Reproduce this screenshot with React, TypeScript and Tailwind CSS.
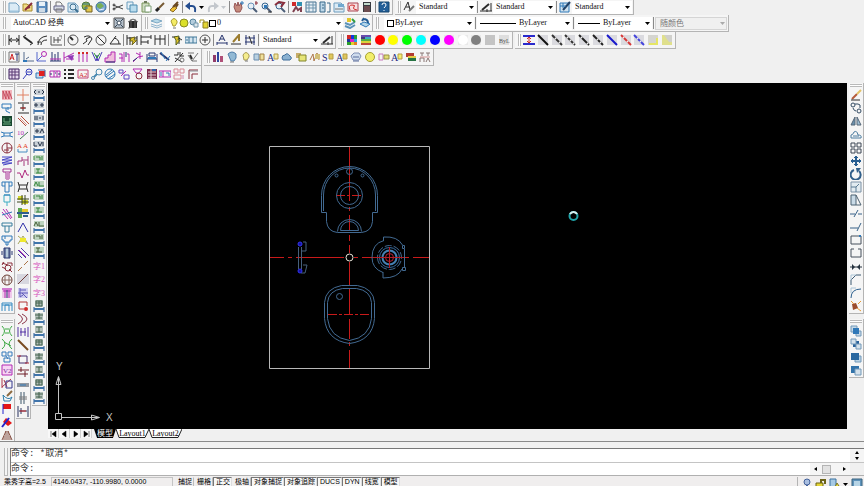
import React from "react";

/* ---------- icon data: every icon lives on a 12 x 12 grid ---------- */

type Shape = { d?: string; s?: string; f?: string; w?: number; t?: string; x?: number; y?: number; z?: number };
type Icon = { n: string; g: Shape[] };

const K = "#2a2a2a";
const N = "#27346e";
const B = "#2f78b8";
const L = "#9cc3dd";
const R = "#d02a2a";
const P = "#b32bb3";
const G = "#2f9e3c";
const Y = "#e3c62c";
const GR = "#777777";
const BR = "#8a2f3c";

const ln = (d: string, s = K, w = 1): Shape => ({ d, s, w });
const fl = (d: string, f: string, s?: string): Shape => ({ d, f, s, w: 1 });
const tx = (t: string, x: number, y: number, s: string, z = 8): Shape => ({ t, x, y, s, z });
const cir = (x: number, y: number, r: number) => `M${x - r} ${y}a${r} ${r} 0 1 0 ${2 * r} 0a${r} ${r} 0 1 0 ${-2 * r} 0z`;
const ic = (n: string, ...g: Shape[]): Icon => ({ n, g });

const page = fl("M1 2h7l3 3v6h-10z", "#dcebf5", "#6f9dbf");

const fileIcons = [
  ic("New", page, ln("M2 10h8", L)),
  ic("Open", fl("M1 3h4l1 1h4v6h-9z", "#f1dc86", "#a88b2c"), ln("M3 9l7-7M5 7l3-1", BR, 2)),
  ic("Save", fl("M1 1h10v10h-10z", "#5d8fc2", "#3a6591"), fl("M3 1h6v4h-6z", "#e8f1f8"), fl("M3 7h6v4h-6z", "#cfdbe6")),
];
const plotIcons = [
  ic("Plot", ln("M3 5v-4h4l2 2v2", GR), fl("M1 5h10v4h-10z", "#d5d9e5", "#666688"), ln("M3 8h6v3h-6z", GR)),
  ic("Plot preview", page, ln(cir(6, 6, 3), "#3d6f91"), ln("M8 8l3 3", "#3d6f91", 2)),
  ic("Publish", fl(cir(5, 5, 4), "#a5ba40", "#4d793f"), fl("M5 5h6v6h-6z", "#e1c64d", "#756225"), ln("M2 3h6M3 7h4", "#3378a5")),
  ic("3D DWF", fl(cir(6, 6, 5), "#7da9d3", "#396c9a"), fl("M2 3l4-1 3 3-4 3-3-2z", "#78ad57"), ln("M4 9l5-1", "#eeeeff")),
];
const editIcons = [
  ic("Cut", ln("M1 4l10 4M1 8l10-4", "#444"), ln(cir(2, 4, 1), "#444"), ln(cir(2, 8, 1), "#444")),
  ic("Copy", fl("M1 1h6v7h-6z", "#e5f1f8", "#6a9cbc"), fl("M4 4h7v7h-7z", "#b9dced", "#4b88ad")),
  ic("Paste", fl("M2 2h7v9h-7z", "#d0dcc3", "#78955b"), fl("M5 5h6v6h-6z", "#fff", "#7e9f77"), ln("M4 1h3", "#6d7a5c", 2)),
  ic("Match properties", ln("M2 10l3-3", "#222", 3), ln("M5 7l5-5", "#775a33", 2)),
  ic("Block editor", fl("M2 9l4-4 3 2-4 4z", "#edbf37", "#8a6920"), ln("M5 6l5-5M8 6l2-3", "#6b4a22", 2)),
];
const undoIcon = [ic("Undo", ln("M3 5h4q4 0 3 6", "#244d8f", 2), fl("M0 5l5-4v8z", "#244d8f"))];
const redoIcon = [ic("Redo", ln("M9 5h-4q-4 0-3 6", "#c3c7cc", 2), fl("M12 5l-5-4v8z", "#c3c7cc"))];
const lens = (c: string) => [fl(cir(5, 5, 3), "#e7eff5", c), ln("M7 7l4 4", "#4c5e78", 2)];
const viewIcons = [
  ic("Pan", fl("M2 6l1-4 2 3 1-4 1 4 2-3 1 5-2 4h-4z", "#c58a7c", "#955453"), ln("M8 2h4M10 0v4", B)),
  ic("Zoom realtime", ...lens("#6590b8"), ln("M9 2h3M10 0v4", BR)),
  ic("Zoom window", ...lens("#38658e"), fl("M4 4h3v3h-3z", B), ln("M8 11h4", K)),
  ic("Zoom previous", ...lens("#38658e"), ln("M1 4l4-3 5 1-3 4", BR, 2)),
];
const paletteIcons = [
  ic("Properties", fl("M1 1h4v4h-4z", R), fl("M6 1h5v4h-5z", "#2e8fb0"), ln("M2 11l3-5 2 3 3-2v4", "#80414f", 2)),
  ic("Design center", fl("M1 1h10v10h-10z", "#e7eff5", "#45718f"), ln("M4 1v10M8 1v10M1 4h10M1 7h10", "#6f95ae")),
  ic("Tool palettes", fl("M1 1h5v10h-5z", "#bdd7e8", "#396889"), ln("M8 2h3v9h-3M3 4h2M3 7h2", "#396889")),
  ic("Sheet set", page, fl("M5 3h6v3h-6z", "#70a8cf"), ln("M2 8h8", GR)),
  ic("Markup set", fl("M1 2h10v8h-10z", "#f7dfe0", "#aa4453"), ln("M3 9q-2-5 2-5t2 2 3 3", R)),
  ic("Calculator", fl("M2 1h8v10h-8z", "#383a40"), fl("M3 2h6v2h-6z", "#c3dacc"), ln("M3 6h6M3 8h6M3 10h6", "#a06161")),
];
const helpIcon = [ic("Help", fl("M1 1h10v10h-10z", "#235f98", "#17466f"), ln("M4 4q0-2 2-2t2 2q0 1-2 3M6 9v1", "#fff"))];
const textStyle = [ic("Text style", ln("M1 9l4-8 2 8M3 6h4", K), ln("M6 10l5-5", GR, 2))];
const dimStyle = [ic("Dimension style", ln("M0 10h12M11 2v8M7 8v3", K), ln("M2 9l7-6", K, 2))];
const tableStyle = [ic("Table style", fl("M1 2h9v9h-9z", "#cfe1ee", B), ln("M4 9l7-8", "#234267", 2), ln("M1 5h6M4 2v5", B))];
const workspaceIcons = [
  ic("Workspace settings", fl("M1 1h10v10h-10z", "#b4bfca", "#555"), fl(cir(6, 6, 2), "#fff", "#345"), ln("M2 2l2 2M10 2l-2 2M2 10l2-2M10 10l-2-2", "#345")),
  ic("My workspace", fl("M2 4h8v7h-8z", K), ln("M1 5l5-3 5 3M4 2v9M8 2v9", "#666"), ln("M1 11h2", GR)),
];
const layersIcon = [ic("Layer manager", fl("M1 4l5-2 6 2-5 2z", "#b7d9e9", "#7fa9c4"), ln("M1 7l6 2 5-2M1 9l6 2 5-2", "#8fb4cd"))];
const layerTools = [
  ic("Make current", ln("M1 9l5 2 5-3M1 6l5 2 5-3", "#5b92b8", 2), fl("M3 1h4v4h-4z", Y), ln("M8 2l3 3", G, 2)),
  ic("Layer previous", fl("M2 7l4-2 6 2-4 3z", "#b4d5e8", B), ln("M10 6q0-4-5-4M4 4l2-3", "#225a92", 2)),
];

const dimA = [
  ic("Linear", ln("M1 1v10M11 1v10M1 6h10M1 6l3-2M1 6l3 2M11 6l-3-2M11 6l-3 2")),
  ic("Aligned", ln("M1 3l3-2M8 11l3-2"), ln("M2 3l8 6", K, 2)),
  ic("Arc length", ln("M2 11q0-8 9-9M5 11q0-5 6-5M1 8h4")),
  ic("Ordinate", ln("M1 2v9h11M4 3v6M4 6h7M8 3v6", "#555"), ln("M9 2h3v3", GR)),
];
const dimB = [
  ic("Radius", ln(cir(6, 6, 5), "#555"), ln("M6 6l-3-3", K, 2)),
  ic("Jogged", ln("M3 3q6-3 8 2l-4 6M2 10l4-3-1-2 4-2")),
  ic("Diameter", ln(cir(6, 6, 5), "#555"), ln("M2 2l8 8", K, 1)),
  ic("Angular", ln("M1 10l6-8M1 10h11M5 4q5 1 5 6")),
];
const dimC = [
  ic("Quick dimension", ln("M1 1v10M4 3v8M11 2v9M1 4h10"), fl("M5 4l4-1-1 3 3 0-5 5 1-4-3 0z", Y, "#6b6420")),
  ic("Baseline", ln("M1 1v10M1 3h10M1 8h7M11 1v4M8 6v4")),
  ic("Continue", ln("M1 1v10M6 1v10M11 1v10M1 5h10")),
];
const dimD = [
  ic("Leader", ln("M1 3h5l5 3M8 3v7", K), fl("M3 3l5-1-1 4 2 0-4 5v-5z", Y, "#556020")),
  ic("Tolerance", fl("M0 3h12v6h-12z", "#d4e5f0", "#3f7798"), ln("M4 3v6M8 3v6M2 5v2", "#3f7798")),
  ic("Center mark", ln(cir(6, 6, 5), "#555"), ln("M6 3v6M3 6h6")),
];
const dimE = [
  ic("Edit dimension", ln("M1 8v3M11 8v3M1 9h10", N), ln("M3 7l3-6 3 6M4 5h4", N)),
  ic("Edit text", ln("M1 10h10", K), ln("M3 8l6-7v6", "#9c7d2f", 2)),
  ic("Update", ln("M2 1v10M10 1v10M1 4h10M1 8h10", N), ln("M5 2l3 8", K)),
];

const rainbow = [
  ic("Color matrix", fl("M1 1h4v4h-4z", R), fl("M5 1h3v4h-3z", "#1236e2"), fl("M8 1h3v4h-3z", G), fl("M1 5h3v3h-3z", "#239"), fl("M4 5h4v3h-4z", "#d2c"), fl("M8 5h3v3h-3z", "#22a4dd"), fl("M1 8h4v3h-4z", "#299f2b"), fl("M5 8h3v3h-3z", "#e3d32b"), fl("M8 8h3v3h-3z", "#e37d28")),
  ic("Color bands", fl("M1 1h10v2h-10z", "#674cae"), fl("M1 3h10v2h-10z", "#3dabc0"), fl("M1 5h10v2h-10z", "#55ad48"), fl("M1 7h10v2h-10z", "#dad33b"), fl("M1 9h10v2h-10z", "#bc483b"), fl("M1 3h4v2h-4z", "#45387e")),
];
const discs = ["#ff0000", "#ffff00", "#00ff00", "#00ffff", "#0000ff", "#ff00ff", "#ffffff", "#808080"].map((c, i) =>
  ic("Color " + (i + 1), fl("M1 1h10v10h-10z", "#e9e9e9"), fl(cir(6, 6, 5), c)),
);
const colorIcons = [...rainbow, ...discs, ic("Color 9", fl("M1 1h10v10h-10z", "#c4c4c4")), ic("By layer", fl("M1 1h10v10h-10z", "#dedede"), tx("ByL", 1, 9, "#555", 6))];

const slash = (n: string, c: string, dots: string): Icon => ic(n, fl("M1 1h10v10h-10z", "#dadadf"), ln("M1 1l10 10", c, 2), ln(dots, "#eee", 2));
const lineIcons = [
  ic("Line scale", ln("M0 2h12M0 10h12", "#2929cc", 2), ln("M6 3v6M4 5l2-2 2 2M4 7l2 2 2-2", R)),
  slash("Continuous", "#111", "M0 0"),
  slash("Dashed", "#333", "M4 4l1 1M8 8l1 1"),
  slash("Hidden", "#333", "M3 3l1 1M6 6l1 1M9 9l1 1"),
  slash("Dashdot", "#222", "M3 3l1 1M9 9l1 1"),
  slash("Dotted", "#222", "M5 5l1 1M8 8l1 1"),
  slash("Blue line", "#1818cc", "M0 0"),
  slash("Center line", "#d83838", "M3 3l1 1M7 7l1 1"),
  slash("Phantom line", "#4444dd", "M4 4l1 1M7 7l1 1"),
  ic("Layer on", fl("M1 1h10v10h-10z", "#d5d5d0"), ln("M2 10h8v-6", "#e6e664", 2)),
  ic("Layer off", fl("M1 1h10v10h-10z", "#e0e08c"), fl("M3 1h8v7h-3z", "#d0d0cc")),
];

const row4a = [
  ic("Edit text", ln("M1 1h10v10h-10z", GR), ln("M2 9l2-6 2 6M3 7h2", R), ln("M7 3h4M9 3v7", N)),
  ic("Coordinate", ln("M2 1v9h10M4 8l3-2", "#556a8c"), ln("M1 10h4", B, 2)),
  ic("Balloon", ln(cir(9, 3, 2.5), P), ln("M2 1v9h9M2 10l5-5", "#56c")),
  ic("Baseline set", ln("M1 10h11M3 1v9M6 3v7M9 1v9", N), ln("M1 8h11", P)),
  ic("Leader up", ln("M1 1v10M1 7l10-5M3 8h8", P), fl("M4 5l7-1-2 6z", "#923bb8")),
  ic("Columns", ln("M2 3v8M6 3v8M10 3v8", P), ln("M1 2h2M5 2h2M9 2h2", R, 2)),
  ic("V notch", ln("M1 1l4 9 2-6M11 1l-4 9-2-6", "#4a3fb5", 1), ln("M3 2l3 5 3-5", G)),
  ic("Step", fl("M1 7h3v-3h3v-3h4v10h-10z", "#f0bcdc", P), ln("M2 11h9", N)),
  ic("Mark", ln("M1 3h3v8M6 1v10M9 3h2v8M1 7h4", P), ln("M8 1v5", N)),
  ic("Taper", ln("M1 11l5-5 5-1M4 2l4 2M8 1v7", P), ln("M1 10l4-3", N)),
  ic("Span", ln("M1 3v8M11 3v8M1 8h10M3 5h6v-3h-6z", N), ln("M2 7h8", B, 2)),
  ic("Section", ln("M1 2l9 7", N, 2), ln("M2 1l4 7M7 10l4-5", B)),
  ic("Find replace", ln("M1 4h4v-3M7 1v4h4M2 11l8-9M2 7l7 4", K), ln(cir(9, 9, 2), GR)),
  ic("Check", ln("M1 4l4 6 6-8M1 2h6M5 10h5", GR), ln("M3 4l2 4", K, 2)),
];
const tag = (n: string, t: string, c: string, f = "#dfc75b"): Icon => ic(n, tx(t, 0, 10, c, 10), fl("M7 3h4v5h-4z", f, "#b59d48"));
const row4b = [
  ic("Chart", fl("M1 4h3v7h-3z", "#933b69"), fl("M5 1h2v10h-2z", "#2c47a0"), fl("M8 5h3v6h-3z", "#b05078")),
  ic("Hide bulb", fl("M2 3q4-4 8 0v4l-2 3h-3z", "#92b9d4", "#4f7eaa"), ln("M4 11h4", GR)),
  ic("Bulb", fl("M3 4q3-5 6 0v2l-2 3h-3z", "#f5ed8d", "#a79b54"), ln("M5 10h3", GR)),
  ic("Thaw", fl("M1 3h5v6h-5z", "#b9d0e0", "#6a8daf"), fl("M7 3h4v6h-4z", "#efe09b", "#a38347")),
  tag("A bulb", "A", "#242c83", "#f0e5a2"),
  ic("Cloud layer", fl("M1 7q0-3 3-3 2-3 5 1 3 2 0 4h-7z", "#8ab1d1", "#406f9b")),
  ic("Copy layer", fl("M1 2h5v5h-5z", "#c8ad6c"), fl("M4 4h7v6h-7z", "#e6e578", "#82852d")),
  ic("Restore layer", ln("M1 9l3-6 1 7 3-8 2 7", "#ad784a"), fl("M6 3h5v5h-5z", "#d2bf78")),
  tag("S layer", "S", "#22267d"),
  tag("A layer", "A", "#22267d"),
  ic("Freeze", fl("M1 5l3-3h5l2 3-2 4h-6z", "#cfdced", "#8090b5"), ln("M3 6h6M3 10h6", "#596c9c")),
  ic("Sun", fl(cir(6, 6, 4.5), "#f2ee6b", "#a7a132")),
  ic("Unlock", ln("M1 3h4v6h-4z", "#c77bbd"), fl("M6 4h5v4h-5z", "#e1db73", "#9a9344")),
  tag("All layers", "A", "#22267d", "#f2ee6b"),
  ic("Stack", fl("M1 2h8v4h-8z", "#b23b31"), fl("M3 5h8v2h-8z", "#e2cb42"), fl("M3 7h8v3h-8z", "#277343")),
  ic("Text layer", ln("M1 2h4M3 2v3M7 2h4M9 2v3M1 11v-4h4v4M7 11l2-4 2 4", "#8a7774"), ln("M1 6h10", "#d49292")),
];
const row5 = [
  ic("Table", fl("M1 1h10v10h-10z", "#e6d9ee", "#3d215e"), ln("M4 1v10M7 1v10M1 4h10M1 7h10", "#5b3b75")),
  ic("Search part", ln(cir(7, 4, 3), "#353fba"), ln("M5 6l-4 5M5 4h4", "#353fba", 1)),
  ic("Overlap", fl("M1 5h7v5h-7z", "#c8d8e8", B), fl("M4 3h6v5h-6z", "#e02222"), ln("M3 2h7v7", "#46a")),
  ic("Frame", ln("M1 3h10v6h-10zM5 3v6M8 3v6", P), ln("M2 5v2M6 5h1M10 5v2", N)),
  ic("List", ln("M1 2h2M1 6h2M1 10h2", K, 2), ln("M5 2h6M5 6h6M5 10h6", K, 2)),
  ic("A2 sheet", ln("M1 2h10v8h-10z", "#c44878"), tx("A2", 2, 9, R, 7)),
  ic("Link", ln(cir(8, 4, 3), "#4888b0"), ln("M6 6l-3 3", "#4888b0", 2), ln(cir(2, 10, 1.5), "#4888b0")),
  ic("Hatch ball", ln(cir(6, 6, 5), "#2c76b4"), ln("M2 7l6-5M2 9l8-6M4 11l7-5", "#2c76b4")),
  ic("Percent", ln("M1 2h4v3h-4zM6 7h5v4h-5z", "#5c47c4"), ln("M3 8l5-5", P)),
  ic("Filter", ln("M1 1h9l-3 4h-3z", P), ln(cir(7, 8, 3), BR)),
  ic("Parts list", fl("M1 1h10v10h-10z", "#7a2b4c"), ln("M2 4h8M2 7h8M2 10h8M5 1v10", "#dcc"), ln("M6 2h4", "#36a", 2)),
  ic("Ruler", ln("M0 3h12v6h-12zM4 3v6", P), ln("M7 5h3v3M2 4v4", B)),
  ic("Title block", ln("M1 1h4v4h-4zM7 1h4v4h-4zM1 7h7v4h-7z", "#d98a95"), ln("M10 7v4", "#d08ab8")),
  ic("Corner", ln("M2 11v-9h9M5 11v-5h6", BR), ln("M3 3h8", "#8d9299")),
];

const leftA = [
  ic("Spring", fl("M1 1h10v10h-10z", "#f0b6bd"), ln("M2 10v-8l3 8v-8l3 8v-8l3 8", "#c5485b")),
  ic("Screw", ln("M1 2h9v4h-9zM5 6v3l4 2M7 5v3", B)),
  ic("Plate", fl("M1 1h10v10h-10z", "#16452e"), ln("M3 3v4h6v-4M2 9h8", "#6dad80")),
  ic("Shaft", ln("M0 4l3 1h6l3-1M0 9l3-1h6l3 1M3 5v3M9 5v3", B)),
  ic("Flange", ln(cir(6, 6, 5), BR), ln("M6 1v5h5M3 8h5M6 6v5", BR)),
  ic("Coil", ln("M1 2h10l-10 3h10l-10 3h10l-9 2", "#4343c4")),
  ic("Bolt", ln("M2 1h8v3h-8zM5 4v7h3v-7", "#a33493", 1), fl("M5 4h3v7h-3z", "#cf8fc6")),
  ic("Nut", ln("M1 1h10v4h-3v6h-4v-6h-3zM4 1v4M8 1v4", B)),
  ic("Key", ln("M3 1h6v7h-6zM6 8v4", "#3cacc3"), ln("M3 1h6", B)),
  ic("Rivet", ln("M2 1l8 10M5 1l6 9M1 4l6 7", P), ln("M1 7l10-3", B)),
  ic("Pin", ln("M1 2h10v3h-10zM4 5v6h4v-6", "#377d9c")),
  ic("Stud", ln("M1 2h10v4h-2v2h-6v-2h-2zM5 8v3h2v-3M4 2v3", B)),
  ic("Bearing", fl("M3 1h6v10h-6z", "#b5c9da", N), ln("M1 4v4M11 4v4M4 1v10M8 1v10", N, 1)),
  ic("Gear", ln(cir(7, 7, 3), BR), ln("M1 2l6 2M1 6l4 2M3 1l-2 3M6 2h5v3M8 8l3 3", BR)),
  ic("Hole", ln(cir(6, 6, 5), "#6a3b32"), ln("M4 1v10M8 1v10M1 6h10", "#8a6a62")),
  ic("T slot", fl("M1 1h10v10h-10z", "#efc9ea"), ln("M1 2h10M4 3v8M8 3v8M2 4h8", P), ln("M6 3v8", N)),
  ic("Bridge", ln("M1 11v-8h10v8M4 11v-6h4v6M1 5h10", "#328ac2")),
];
const leftA2 = [
  ic("Weld", ln("M1 1q5 5 0 10M11 1q-5 5 0 10M4 4h4M4 8h4", "#3da843")),
  ic("Weld cross", ln("M1 1q6 5 0 10M11 1q-6 5 0 10M3 4l7 4", "#3da843")),
  ic("Number", ln("M1 1h4v4h-4zM7 1h4v4h-4zM3 7h6v4h-6zM5 5l2 3", "#3278ba")),
  ic("V2", fl("M1 1h10v10h-10z", "#f7d4f4", P), tx("V2", 2, 9, "#743099", 7)),
  ic("Trim", ln("M1 1v10M1 10l9-8M3 3l3 7", "#ae344a"), ln("M5 4h6v7h-6z", "#34378b")),
  ic("Paint", ln("M2 5q5 6 9 2l-2 4h-6z", "#2b7baa", 1), ln("M6 6l5-5", "#8c6a3f", 2)),
  ic("Flag", fl("M2 1h8v5h-8z", "#e51616"), ln("M2 1v10", "#2525cc")),
  ic("Flag turn", fl("M5 2l6 5-4 3-5-4z", "#e51616"), ln("M1 11l7-9", "#2525cc", 2)),
  ic("Tower", ln("M1 11l4-9v9M11 11l-4-9v9M3 11v-4M9 11v-4", "#855044")),
];
const leftB = [
  ic("Center", ln("M6 0v12M0 6h12", "#e08062", 1)),
  ic("Gap", ln("M1 1h11M1 11h11M6 2v7M3 6h6", K), ln("M4 6h4", R)),
  ic("Double hatch", ln("M1 3l8 8M4 1l8 8", "#b74a38", 1), ln("M3 3l7 7", "#d99a8f")),
  ic("Slope", ln("M3 11l8-7", "#3f7350", 1), tx("10", 0, 7, P, 7)),
  ic("A A", tx("A A", 0, 7, "#e23a22", 7), ln("M1 8v3h9v-3", "#478cc0")),
  ic("Break", ln("M1 10v-4h4v-4M11 1v9M5 5h6M7 6v5", "#a43b7c")),
  ic("Zigzag", ln("M0 5h3l2 5 3-8 2 5h2", "#b02b80")),
  ic("Trim both", ln("M1 1q3 5 0 10M11 1q-3 5 0 10M2 4h8M2 8h8", K)),
  ic("Cross bars", fl("M1 2h5v4h-5zM5 6h6v4h-6z", "#d4d82f"), ln("M0 5h12M0 8h12M5 1v10M8 1v10", "#3c461f")),
  ic("Color bars", fl("M1 1h4v10h-4z", "#5ba550"), fl("M5 2h6v4h-6z", Y), ln("M0 6h12M6 9h5", "#2f5e8d", 2)),
  ic("Angle", ln("M1 11l5-9 5 9", "#3131a8", 1)),
  ic("Star", ln("M1 10l5-8 5 8M1 2l10 8", "#a6a65c", 1), fl("M3 4h6v4h-6z", "#efe92e")),
  ic("Three lines", ln("M1 3l8 8M4 1l8 8M1 7l4 4", "#4d38a3"), ln("M2 3l7 7", P)),
  ic("Dash line", ln("M1 11l4-4M7 5l4-4", "#aa7345", 1)),
  ic("Line", fl("M0 1h12v10h-12z", "#d7d7df"), ln("M1 11l10-10", "#703d3a", 1)),
  ic("Long", fl("M1 1h10v10h-10z", "#cfcdf0"), ln("M3 1v9M3 3h6M1 6h10M5 6l5 5M3 10l3-2", "#5c58b8")),
  ic("Polyline", ln("M2 9v-7h8v4M2 9h5", "#b23737"), fl(cir(9, 9, 2), R)),
  ic("Parallel arcs", ln("M1 1q9 5 0 10M5 1q10 5 0 10", "#8b3648")),
  ic("Mirror", ln("M1 1v10M11 1v10M3 6h6M4 2v8M8 2v8", "#5330a2")),
  ic("Section line", ln("M1 1l10 10", "#784a1f", 2)),
  ic("Box", ln("M2 3h8v7h-8z", "#46306e"), ln("M0 3h4M8 10h4", "#ad2937")),
  ic("Hatch cross", ln("M1 4h11M0 8h11M4 1v5M8 5v6", "#6e1d27", 1)),
  ic("Flat", ln("M0 5h12M0 7h12", "#313b4a"), ln("M3 6h6", B)),
  ic("Upright", ln("M4 0v12M7 0v12", "#3c566a"), ln("M2 5h8M2 7h8", GR)),
  ic("Equal", ln("M1 1v11M11 1v11M2 6h8M4 3v6", "#28335f"), ln("M3 6h6", R)),
];

const span = [ln("M1 7v5M11 7v5", "#27568f", 1), ln("M1 9h10", "#3f74ab", 2)];
const over = ["M3 1l-2 2 2 2M5 3h2M9 1l2 2-2 2", "M1 3h4M3 1v4M7 3h4M9 1v4", "M1 2h4M1 4h4M6 3h2M10 1v4", "M2 3h4M4 1v4M7 5l2-4 2 4", "M1 1v4h3M5 1l2 4 2-4M10 1v4"];
const leftC: Icon[] = [
  ...over.map((d, i) => ic("Fit " + (i + 1), fl("M1 0h10v6h-10z", "#c9d0d6"), ln(d, "#263348", 1), ...span)),
  ...[0, 1, 2, 3, 4, 5, 6, 7].map((i) => ic("Tolerance " + (i + 1), fl("M1 0h10v6h-10z", "#bdd3bf"), ln(["M1 1v4M3 2h4v3M9 1v4", "M3 1h4M3 5h6M5 1v4", "M1 5l2-4 2 4M6 1v4h5"][i % 3], i < 5 ? "#37883d" : "#475f38", 1), ...span)),
  ...["1", "2", "3"].map((n) => ic("字" + n, tx("字" + n, 0, 9, "#d654bd", 8))),
  ...[0, 1, 2, 3, 4, 5, 6, 7].map((i) => ic("Character " + (i + 1), fl("M2 0h8v7h-8z", "#b4c0ba"), ln(["M3 1h6v5h-6zM3 3h6M6 1v5", "M2 2h8M3 5h6M6 0v6", "M3 1h6M6 1v5M3 6h6"][i % 3], "#45634f"), ...span)),
];

const modify = [
  ic("Erase", ln("M2 10l5-5", "#b55a3a", 2), ln("M7 5l4-4", "#e3c265", 2), ln("M1 11h9", K)),
  ic("Copy object", ln(cir(3, 3, 2), "#324a62"), ln(cir(9, 9, 2), "#324a62"), ln("M5 2h3q3 0 2 4M3 6q1 3 3 3", "#324a62")),
  ic("Mirror object", fl("M5 2v8h-4z", "#6b91ad", "#567"), fl("M7 2v8h4z", "#9fbfd5", "#567")),
  ic("Offset", ln("M1 10h10q1-3-3-3-1-5-4-3-1 3-3 3z", "#4c7ca0"), ln("M3 8h6", "#4c7ca0")),
  ic("Array", ln("M1 1h4v4h-4zM7 1h4v4h-4zM1 7h4v4h-4zM7 7h4v4h-4z", "#3d4654")),
  ic("Move", ln("M6 1v10M1 6h10", "#285e91", 2), ln("M4 3l2-2 2 2M4 9l2 2 2-2M3 4l-2 2 2 2M9 4l2 2-2 2", "#285e91")),
  ic("Rotate", ln("M4 2a5 5 0 1 0 5 1", "#315f8a", 2), fl("M6 0h5l-4 5z", "#315f8a")),
  ic("Scale", fl("M1 1h10v10h-10z", "#e2ebf0", "#7c92a6"), ln("M1 6h5v5M6 6l3-3", "#5b7a92")),
  ic("Stretch", fl("M1 1h5v10h-5z", "#c9dae6", "#4d6272"), ln("M6 1l5 10h-5", "#4d6272")),
  ic("Trim object", ln("M0 6h5M8 6h4M4 9l4-7", "#376188")),
  ic("Extend", ln("M0 7h8M7 10l4-8", "#376188")),
  ic("Break at point", ln("M1 2h10v8h-10z", "#46505c"), ln("M9 2h2", B, 2)),
  ic("Break object", ln("M4 2h-3v8h10v-8h-3", "#46505c")),
  ic("Join", ln("M0 6h12", "#26333f"), fl("M2 3l3 3-3 3zM10 3l-3 3 3 3z", "#26333f")),
  ic("Chamfer", ln("M1 11v-5l5-5h5", "#3d5a73"), ln("M1 1h5M1 1v5", "#aac4d6")),
  ic("Fillet", ln("M1 11q0-9 10-9", "#2c5f8e", 1), ln("M1 1h5M1 1v5", "#aac4d6")),
  ic("Explode", fl("M2 4l4-1 2 5-5 2z", "#9b4c2e"), ln("M1 1l3 3M11 1l-3 3M7 8l4 3", "#e59b36", 1)),
];
const order = [
  ic("Bring front", fl("M1 1h6v6h-6z", "#c5d8e7", "#7399b9"), fl("M6 6h5v5h-5z", "#c5d8e7", "#7399b9"), fl("M3 3h6v6h-6z", B)),
  ic("Send back", fl("M3 3h6v6h-6z", "#2a639b"), fl("M1 1h5v5h-5z", "#d4e1eb", "#7399b9"), fl("M6 6h5v5h-5z", "#d4e1eb", "#7399b9")),
  ic("Bring above", fl("M5 5h6v6h-6z", "#bad3e5", "#7399b9"), fl("M1 2h8v7h-8z", "#29679f")),
  ic("Send under", fl("M1 2h8v7h-8z", "#3273aa"), fl("M5 5h6v6h-6z", "#d4e1eb", "#7399b9")),
];

/* ---------- small building blocks ---------- */

function Glyph({ icon }: { icon: Icon }) {
  return (
    <svg viewBox="0 0 12 12" className="h-3 w-3 shrink-0" aria-hidden="true">
      {icon.g.map((p, i) =>
        p.t ? (
          <text key={i} x={p.x} y={p.y} fill={p.s} fontSize={p.z} fontFamily="Liberation Serif, Noto Sans CJK SC, serif">
            {p.t}
          </text>
        ) : (
          <path key={i} d={p.d} fill={p.f ?? "none"} stroke={p.s ?? "none"} strokeWidth={p.w} />
        ),
      )}
    </svg>
  );
}

function Buttons({ items, wide = "", vertical = false }: { items: Icon[]; wide?: string; vertical?: boolean }) {
  const cell = wide ? "flex min-h-0 min-w-0 flex-1 items-center justify-center" : "flex w-[14px] items-center justify-center";
  return (
    <div className={`flex shrink-0 ${vertical ? "w-[14px] flex-col" : "h-[14px]"} ${wide}`}>
      {items.map((icon) => (
        <button key={icon.n} type="button" aria-label={icon.n} title={icon.n} className={cell}>
          <Glyph icon={icon} />
        </button>
      ))}
    </div>
  );
}

const Sep = () => <span className="mx-px h-3 w-px shrink-0 bg-[#8a8a8a]" />;
const Grip = () => <span className="mr-px h-3 w-[3px] shrink-0 border-x border-[#b9b9b9] bg-white" />;
const GripH = () => <span className="my-px h-[3px] w-3 shrink-0 self-center border-y border-[#b9b9b9] bg-white" />;

function Bar({ label, children }: { label: string; children: React.ReactNode }) {
  return (
    <div role="toolbar" aria-label={label} className="flex h-full shrink-0 items-center border-r border-b border-[#b4b4b4] bg-[#f5f5f5] pr-px pl-[3px]">
      <Grip />
      {children}
    </div>
  );
}

function Drop({ label, value, size, pad = "pl-[3px]", disabled = false, children }: { label: string; value: string; size: string; pad?: string; disabled?: boolean; children?: React.ReactNode }) {
  return (
    <div className={`relative h-[13px] shrink-0 ${size}`}>
      <select
        aria-label={label}
        disabled={disabled}
        defaultValue={value}
        className={`h-full w-full appearance-none font-['Liberation_Serif','Noto_Sans_CJK_SC',serif] text-[8px] leading-[12px] ${pad} ${disabled ? "border border-[#d5d5d5] bg-[#f0f0f0] text-[#777]" : "bg-white text-[#111]"}`}
      >
        <option>{value}</option>
      </select>
      <div className="pointer-events-none absolute inset-0 flex items-center gap-px pl-[3px]">
        {children}
        <Caret tone={disabled ? "text-[#aaa]" : "text-black"} />
      </div>
    </div>
  );
}

function Caret({ tone }: { tone: string }) {
  return (
    <svg viewBox="0 0 5 3" className={`mr-[2px] ml-auto h-[3px] w-[5px] shrink-0 ${tone}`} aria-hidden="true">
      <path d="M0 0h5l-2.5 3z" fill="currentColor" />
    </svg>
  );
}

const More = ({ label, tone }: { label: string; tone: string }) => (
  <button type="button" aria-label={label} className="flex h-3 w-2 items-center">
    <Caret tone={tone} />
  </button>
);

const layerState = [
  ic("On", fl("M3 4q3-5 6 0v2l-2 3h-2z", "#f4ec65", "#a89d35"), ln("M5 11h3", GR)),
  ic("Thawed", fl(cir(6, 6, 4), "#dbe02a", "#898b22")),
  ic("Viewport", fl(cir(5, 5, 3), "#b3cddd", "#55849e"), fl("M6 6h4v4h-4z", "#dde8ee", "#7195aa")),
  ic("Unlocked", fl("M5 5h5v6h-5z", "#e4d534", "#897e20"), ln("M2 6v-3h4v3", "#a09124", 1)),
];

/* ---------- drawing area ---------- */

function Drawing() {
  return (
    <svg viewBox="48 83 799 346" preserveAspectRatio="xMinYMin meet" className="h-full w-full" role="img" aria-label="Drawing area">
      <path d="M269.5 146.5h160v222h-160z" fill="none" stroke="#b8b8b8" />
      <g stroke="#c81a1a" fill="none">
        <path d="M349.5 147v54M349.5 207v4M349.5 215v16M349.5 235v6M349.5 245v8M349.5 262v24M349.5 289v26M349.5 319v20M349.5 342v4M349.5 350v18" />
        <path d="M270 257.5h14M288 257.5h4M296 257.5h48M354 257.5h4M362 257.5h12M405 257.5h4M413 257.5h16" />
        <path d="M336 195.5h27M328 314.5h43" strokeDasharray="9 2 3 2" />
        <path d="M374 257.5h30M389.5 247v21" />
      </g>
      <g stroke="#426a92" fill="none">
        <path d="M321.5 212.5v-17a28 29 0 0 1 56 0v17h-5v9q-1 10-11 11h-24q-10-1-11-11v-9z" />
        <path d="M323.5 211v-16a26 27 0 0 1 52 0v16" />
        <path d="M337.5 231.5a12 12 0 0 1 24 0M340.5 230.5a9 9 0 0 1 18 0z" />
        <path d={cir(349.5, 195.5, 13)} />
        <path d={cir(349.5, 195.5, 9)} />
        <path d={cir(349.5, 171.5, 3)} />
        <path d={cir(336.5, 175.5, 1.5)} />
        <path d={cir(362.5, 175.5, 1.5)} />
        <path d="M298.5 247v22M301.5 247v22M303 242h3v9h-4M303 265h4l-2 8h-4" stroke="#46607c" />
        <path d="M383.5 241v-4q14-1 19 8M402 269q-4 9-19 9v-6M383 272.5q-11-4-11-15 0-14 12-17" />
        <path d="M402.5 245.5h2v3h-2zM402.5 267.5h3v3h-3zM404.5 249v19" />
        <path d={cir(389.5, 257.5, 12)} strokeDasharray="7 2" />
        <path d={cir(389.5, 257.5, 10)} stroke="#376ea5" />
        <path d={cir(389.5, 257.5, 7)} stroke="#4580b2" strokeWidth="2" />
        <path d="M341.5 285.5h16q16 3 17 17v16q-2 22-25 25-23-3-25-25v-16q1-14 17-17z" />
        <path d="M342.5 288.5h14q14 2 15 14v16q-2 19-22 22-20-3-22-22v-16q1-12 15-14z" />
        <path d={cir(339.5, 296.5, 3)} />
      </g>
      <path d={cir(389.5, 257.5, 4)} fill="none" stroke="#b02134" />
      <path d="M374 257.5h30M389.5 247v21" stroke="#b41c24" />
      <path d={cir(300, 244, 2) + cir(300, 271, 2)} fill="#1414a8" stroke="#3434ee" />
      <path d={cir(349.5, 257.5, 3.5)} fill="#000" stroke="#e6e1d6" />
      <path d={cir(573.5, 216, 4)} fill="none" stroke="#20a3a8" strokeWidth="2" />
      <path d="M570 214a4 4 0 0 1 7 0" fill="none" stroke="#d6eeee" strokeWidth="2" />
      <path d="M55.5 413.5h6v6h-6zM58.5 413v-36M56 384.5l2.5-8 2.5 8zM62 417.5h37M91.5 415l8 2.5-8 2.5z" fill="none" stroke="#c4c4c4" />
      <g fill="#c4c4c4" className="font-['Liberation_Sans',sans-serif] text-[10px]">
        <text x="56" y="370">Y</text>
        <text x="106" y="421">X</text>
      </g>
    </svg>
  );
}

const moves = [
  { n: "First layout", d: "M2 1v6M7 1l-4 3 4 3z" },
  { n: "Previous layout", d: "M6 1l-4 3 4 3z" },
  { n: "Next layout", d: "M3 1l4 3-4 3z" },
  { n: "Last layout", d: "M2 1l4 3-4 3zM7 1v6" },
];

function LayoutTabs() {
  return (
    <div className="flex h-3 shrink-0 items-start bg-[#f0f0f0] font-['Liberation_Serif','Noto_Sans_CJK_SC',serif] text-[8px] leading-[9px] text-black">
      {moves.map((m) => (
        <button key={m.n} type="button" aria-label={m.n} className="flex h-[9px] w-[11px] items-center justify-center border-r border-[#d0d0d0] bg-[#f8f8f8]">
          <svg viewBox="0 0 8 8" className="h-2 w-2">
            <path d={m.d} fill="#000" stroke="#000" strokeWidth="0.5" />
          </svg>
        </button>
      ))}
      <div role="tablist" className="ml-[2px] flex">
        <button type="button" role="tab" aria-selected="true" className="flex h-[9px] w-[22px] items-center justify-center bg-black text-white [clip-path:polygon(0_0,100%_0,86%_100%,14%_100%)]">
          模型
        </button>
        {["Layout1", "Layout2"].map((t) => (
          <button key={t} type="button" role="tab" aria-selected="false" className="relative flex h-[9px] w-[33px] items-center justify-center">
            <svg viewBox="0 0 33 9" className="absolute inset-0 h-[9px] w-[33px]" aria-hidden="true">
              <path d="M0 0l3 8.5h26l4-8.5" fill="#fff" stroke="#222" />
            </svg>
            <span className="relative">{t}</span>
          </button>
        ))}
      </div>
    </div>
  );
}

/* ---------- status bar ---------- */

const toggles = [
  { t: "捕捉", on: false },
  { t: "栅格", on: false },
  { t: "正交", on: true },
  { t: "极轴", on: false },
  { t: "对象捕捉", on: true },
  { t: "对象追踪", on: true },
  { t: "DUCS", on: true },
  { t: "DYN", on: true },
  { t: "线宽", on: true },
  { t: "模型", on: true },
];

const tray = [
  ic("Communication", fl(cir(6, 4, 3), "#a9bee0", "#44629b"), ln("M3 9h6M6 7v5", "#44629b", 2)),
  ic("Lock", fl("M1 5h7v6h-7z", "#e4d534", "#6b6318"), ln("M6 5v-3h4v4", "#6b6318", 2)),
  ic("Standards", fl("M1 1h6v9h-6z", "#a6c9e3", "#3b72a0"), fl("M5 11l3-6 4 6z", "#f0e23c", "#777026")),
];
const cleanIcon = [ic("Clean screen", fl("M1 1h10v10h-10z", "#5e93bb", "#39627f"), fl("M3 3h6v6h-6z", "#b6d4e6"))];

export default function App() {
  return (
    <div className="flex h-screen w-full flex-col overflow-hidden bg-[#f0f0f0] font-['Liberation_Sans','Noto_Sans_CJK_SC',sans-serif] text-[8px] text-black">
      <header className="shrink-0">
        <div className="flex h-[15px] gap-[2px]">
          <Bar label="Standard">
            <Buttons items={fileIcons} /><Sep />
            <Buttons items={plotIcons} /><Sep />
            <Buttons items={editIcons} /><Sep />
            <Buttons items={undoIcon} /><More label="Undo list" tone="text-black" />
            <Buttons items={redoIcon} /><More label="Redo list" tone="text-[#c3c7cc]" /><Sep />
            <Buttons items={viewIcons} /><Sep />
            <Buttons items={paletteIcons} /><Sep />
            <Buttons items={helpIcon} />
          </Bar>
          <Bar label="Styles">
            <Buttons items={textStyle} />
            <Drop label="Text style" value="Standard" size="w-[60px]" /><Sep />
            <Buttons items={dimStyle} />
            <Drop label="Dimension style" value="Standard" size="w-[62px]" /><Sep />
            <Buttons items={tableStyle} />
            <Drop label="Table style" value="Standard" size="w-[60px]" />
          </Bar>
        </div>
        <div className="flex h-[17px]">
          <Bar label="Workspaces">
            <div className="ml-1"><Drop label="Workspace" value="AutoCAD 经典" size="w-[101px]" pad="pl-[2px]" /></div>
            <Buttons items={workspaceIcons} />
          </Bar>
          <Bar label="Layers">
            <Buttons items={layersIcon} />
            <div className="ml-[2px]">
              <Drop label="Layer" value="0" size="w-[178px]" pad="pl-[52px]">
                <div className="flex">{layerState.map((i) => <div key={i.n} className="w-[10px]"><Glyph icon={i} /></div>)}</div>
                <span className="h-[7px] w-[7px] border border-black bg-white" />
              </Drop>
            </div>
            <Buttons items={layerTools} />
          </Bar>
          <Bar label="Properties">
            <div className="ml-1">
              <Drop label="Color" value="ByLayer" size="w-[90px]" pad="pl-[11px]">
                <span className="h-[7px] w-[7px] border border-black bg-white" />
              </Drop>
            </div>
            <Sep />
            <Drop label="Linetype" value="ByLayer" size="w-[95px]" pad="pl-[42px]"><span className="h-px w-9 bg-black" /></Drop><Sep />
            <Drop label="Lineweight" value="ByLayer" size="w-[77px]" pad="pl-[28px]"><span className="h-px w-[22px] bg-black" /></Drop><Sep />
            <Drop label="Plot style" value="随颜色" size="w-[72px]" pad="pl-1" disabled />
          </Bar>
        </div>
        <div className="flex h-[17px] gap-[2px]">
          <Bar label="Dimension">
            <Buttons items={dimA} /><Sep />
            <Buttons items={dimB} /><Sep />
            <Buttons items={dimC} /><Sep />
            <Buttons items={dimD} /><Sep />
            <Buttons items={dimE} /><Sep />
            <Drop label="Current dimension style" value="Standard" size="w-[60px]" />
            <Buttons items={dimStyle} />
          </Bar>
          <Bar label="Colors"><Buttons items={colorIcons} wide="w-[166px]" /></Bar>
          <Bar label="Line types"><Buttons items={lineIcons} wide="w-[152px]" /></Bar>
        </div>
        <div className="flex h-[17px] gap-[2px]">
          <Bar label="Annotation"><Buttons items={row4a} wide="w-[193px]" /></Bar>
          <Bar label="Layer tools"><Buttons items={row4b} wide="w-[221px]" /></Bar>
        </div>
        <div className="flex h-[17px]">
          <Bar label="Tables"><Buttons items={row5} wide="w-[193px]" /></Bar>
        </div>
      </header>

      <main className="flex min-h-0 flex-1">
        <aside className="flex w-12 shrink-0 items-start gap-px overflow-hidden">
          <div className="flex flex-col">
            <div role="toolbar" aria-label="Parts" className="flex flex-col border-r border-b border-[#b4b4b4] bg-[#f5f5f5]">
              <GripH />
              <Buttons items={leftA} vertical wide="h-[225px]" />
            </div>
            <div role="toolbar" aria-label="Symbols" className="mt-[5px] flex flex-col border-r border-[#b4b4b4] bg-[#f5f5f5]">
              <GripH />
              <Buttons items={leftA2} vertical wide="h-[118px]" />
            </div>
          </div>
          <div role="toolbar" aria-label="Construction" className="flex flex-col border-r border-b border-[#b4b4b4] bg-[#f5f5f5]">
            <GripH />
            <Buttons items={leftB} vertical wide="h-[330px]" />
          </div>
          <div role="toolbar" aria-label="Fits" className="flex flex-col border-r border-b border-[#b4b4b4] bg-[#f5f5f5]">
            <GripH />
            <Buttons items={leftC} vertical wide="h-[317px]" />
          </div>
        </aside>
        <section className="flex min-w-0 flex-1 flex-col">
          <div className="min-h-0 flex-1 bg-black"><Drawing /></div>
          <LayoutTabs />
        </section>
        <aside className="flex w-[17px] shrink-0 flex-col items-end">
          <div role="toolbar" aria-label="Modify" className="flex flex-col border-r border-b border-[#b4b4b4] bg-[#f5f5f5]">
            <GripH />
            <Buttons items={modify} vertical wide="h-[225px]" />
          </div>
          <div role="toolbar" aria-label="Draw order" className="mt-[5px] flex flex-col border-r border-b border-[#b4b4b4] bg-[#f5f5f5]">
            <GripH />
            <Buttons items={order} vertical wide="h-[53px]" />
          </div>
        </aside>
      </main>

      <section aria-label="Command line" className="flex shrink-0 border-t border-[#8a8a8a] pt-[6px]">
        <div className="mr-[2px] ml-1 w-[4px] border-x border-b border-[#b9b9b9] bg-[#f5f5f5]" />
        <div className="flex min-w-0 flex-1 flex-col border-t border-l border-[#777] bg-white font-['Liberation_Mono','Noto_Sans_CJK_SC',monospace] text-[9px] text-[#333]">
          <div className="flex h-[14px] items-start border-b border-[#c4c4c4]">
            <output className="flex-1 leading-[10px]">命令: *取消*</output>
            <div className="flex h-full w-[14px] flex-col items-center justify-between bg-[#f5f5f5] py-[2px]">
              <button type="button" aria-label="Scroll up" className="flex"><svg viewBox="0 0 4 3" className="h-[3px] w-1"><path d="M0 3l2-3 2 3z" /></svg></button>
              <button type="button" aria-label="Scroll down" className="flex"><svg viewBox="0 0 4 3" className="h-[3px] w-1"><path d="M0 0l2 3 2-3z" /></svg></button>
            </div>
          </div>
          <div className="flex h-[13px] items-center border-b border-[#b0b0b0]">
            <label htmlFor="command" className="leading-[12px]">命令:</label>
            <input id="command" type="text" className="h-full min-w-0 flex-1 bg-transparent px-1 outline-none" />
            <div className="flex h-full w-10 items-center justify-between bg-[#f5f5f5] px-1">
              <button type="button" aria-label="Scroll left" className="flex"><svg viewBox="0 0 3 4" className="h-1 w-[3px]"><path d="M3 0l-3 2 3 2z" /></svg></button>
              <span className="mr-2 h-[9px] w-[9px] border border-[#b4b4b4] bg-[#e2e2e2]" />
              <button type="button" aria-label="Scroll right" className="flex"><svg viewBox="0 0 3 4" className="h-1 w-[3px]"><path d="M0 0l3 2-3 2z" /></svg></button>
            </div>
            <span className="h-full w-[14px] bg-[#f0f0f0]" />
          </div>
        </div>
      </section>

      <footer className="flex h-[10px] shrink-0 items-start bg-[#f0eeee] pt-px pl-1 text-[7px] leading-[8px] whitespace-nowrap">
        <span className="w-[47px] pt-px">乘秀字高=2.5</span>
        <span className="w-[122px] border-x border-t border-[#c4c4c4] pl-px">4146.0437, -110.9980, 0.0000</span>
        <div className="ml-[2px] flex">
          {toggles.map((b) => (
            <button
              key={b.t}
              type="button"
              aria-pressed={b.on}
              className={`border-x border-t pr-px pl-[2px] ${b.on ? "border-[#777] border-r-[#ddd] bg-[#f7f7f7]" : "border-transparent border-r-[#bbb]"}`}
            >
              {b.t}
            </button>
          ))}
        </div>
        <div className="ml-auto flex items-center border-l border-[#b4b4b4] pl-[2px]">
          <Buttons items={tray} />
          <More label="Status bar menu" tone="text-black" />
          <Buttons items={cleanIcon} />
        </div>
      </footer>
    </div>
  );
}
